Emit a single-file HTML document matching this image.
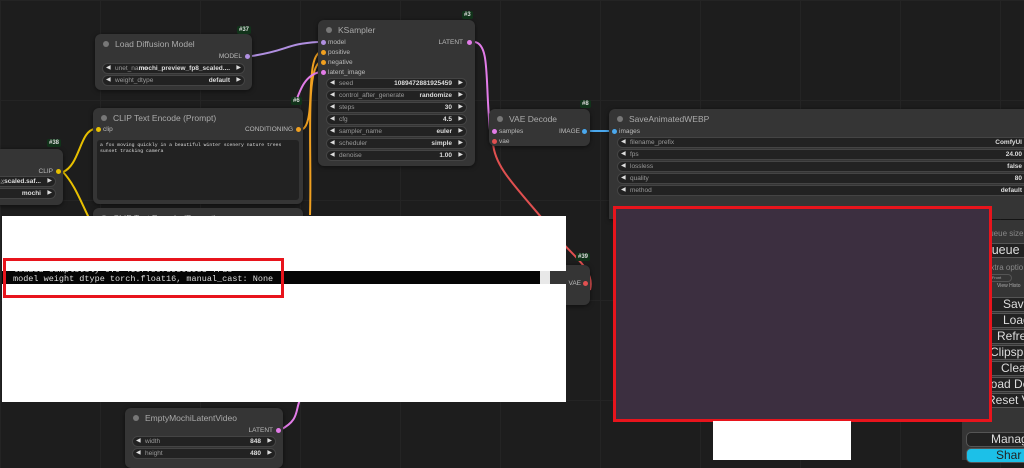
<!DOCTYPE html>
<html><head><meta charset="utf-8"><style>
*{box-sizing:border-box;margin:0;padding:0}
body{width:1024px;height:460px;overflow:hidden;background:#1d1d1d;font-family:"Liberation Sans",sans-serif;position:relative;
background-image:linear-gradient(#242424 1px,transparent 1px),linear-gradient(90deg,#242424 1px,transparent 1px);background-size:100px 100px;}
.n{position:absolute;background:#353535;border-radius:6px;box-shadow:0 1px 4px #0008}
.t{position:absolute;left:0;top:0;right:0;height:20px;color:#aaa;font-size:8.5px;line-height:20px;padding-left:20px}
.t:before{content:"";position:absolute;left:8px;top:7px;width:6px;height:6px;border-radius:50%;background:#777}
.id{position:absolute;background:#11331a;color:#ddd;font-size:6px;font-weight:bold;padding:1px 2px;border-radius:2px}
.w{position:absolute;height:11px;background:#222;border-radius:6px;border:1px solid #444;font-size:6.5px;color:#999;line-height:9px;padding:0 12px}
.w b{position:absolute;right:14px;color:#ddd}
.w:before{content:"◀";position:absolute;left:3px;color:#ddd;font-size:6px}
.w:after{content:"▶";position:absolute;right:3px;color:#ddd;font-size:6px}
.s{position:absolute;font-size:6.5px;color:#bbb}
.d{position:absolute;width:5px;height:5px;border-radius:50%}
.btn{position:absolute;left:969px;width:90px;height:15px;background:#222;border:1px solid #555;border-radius:5px;color:#ddd;font-size:12px;text-align:left;line-height:13px;white-space:nowrap;overflow:hidden}
</style></head><body>
<svg width="1024" height="460" style="position:absolute;left:0;top:0">
<g fill="none" stroke-width="2">
<path d="M252 56 C290 50 285 44 318 42" stroke="#b08fe0"/>
<path d="M475 42 C490 45 485 80 490 130" stroke="#e27ce8"/>
<path d="M63 172 C80 165 80 130 95 129" stroke="#e8c000"/>
<path d="M63 172 C75 185 80 200 90 220" stroke="#e8c000"/>
<path d="M303 129 C316 120 305 60 320 52 M310 215 C312 150 305 70 320 62" stroke="#f0a020"/>
<path d="M295 104 C300 90 305 75 320 72" stroke="#e27ce8"/>
<path d="M590 131 L612 131" stroke="#4aa8ee"/>
<path d="M493 143 C495 170 520 190 560 240 C575 258 595 270 590 290" stroke="#e05050"/>
<path d="M280 430 C300 420 295 410 300 400" stroke="#e27ce8"/>
</g></svg>

<div class="n" style="left:95px;top:34px;width:157px;height:56px"><div class="t">Load Diffusion Model</div>
<div class="s" style="right:10px;top:19px">MODEL</div><div class="d" style="right:2px;top:20px;background:#b08fe0"></div>
<div class="w" style="left:7px;top:29px;width:143px">unet_name<b>mochi_preview_fp8_scaled....</b></div>
<div class="w" style="left:7px;top:41px;width:143px">weight_dtype<b>default</b></div></div>
<div class="id" style="left:237px;top:26px">#37</div>

<div class="n" style="left:318px;top:20px;width:157px;height:146px"><div class="t">KSampler</div>
<div class="s" style="left:10px;top:19px">model</div><div class="d" style="left:3px;top:20px;background:#b08fe0"></div>
<div class="s" style="left:10px;top:29px">positive</div><div class="d" style="left:3px;top:30px;background:#f0a020"></div>
<div class="s" style="left:10px;top:39px">negative</div><div class="d" style="left:3px;top:40px;background:#f0a020"></div>
<div class="s" style="left:10px;top:49px">latent_image</div><div class="d" style="left:3px;top:50px;background:#e27ce8"></div>
<div class="s" style="right:12px;top:19px">LATENT</div><div class="d" style="right:3px;top:20px;background:#e27ce8"></div>
<div class="w" style="left:8px;top:58px;width:141px">seed<b>1089472881925459</b></div>
<div class="w" style="left:8px;top:70px;width:141px">control_after_generate<b>randomize</b></div>
<div class="w" style="left:8px;top:82px;width:141px">steps<b>30</b></div>
<div class="w" style="left:8px;top:94px;width:141px">cfg<b>4.5</b></div>
<div class="w" style="left:8px;top:106px;width:141px">sampler_name<b>euler</b></div>
<div class="w" style="left:8px;top:118px;width:141px">scheduler<b>simple</b></div>
<div class="w" style="left:8px;top:130px;width:141px">denoise<b>1.00</b></div></div>
<div class="id" style="left:462px;top:11px">#3</div>

<div class="n" style="left:93px;top:108px;width:210px;height:96px"><div class="t">CLIP Text Encode (Prompt)</div>
<div class="s" style="left:10px;top:18px">clip</div><div class="d" style="left:3px;top:19px;background:#e8c000"></div>
<div class="s" style="right:10px;top:18px">CONDITIONING</div><div class="d" style="right:2px;top:19px;background:#f0a020"></div>
<div style="position:absolute;left:4px;top:32px;width:202px;height:60px;background:#222;border-radius:3px;color:#ddd;font:4.8px 'Liberation Mono',monospace;padding:3px;line-height:6px">a fox moving quickly in a beautiful winter scenery nature trees sunset tracking camera</div></div>
<div class="id" style="left:291px;top:97px">#6</div>

<div class="n" style="left:-20px;top:149px;width:83px;height:56px">
<div class="s" style="right:10px;top:19px">CLIP</div><div class="d" style="right:2px;top:20px;background:#e8c000"></div>
<div class="w" style="left:0;top:27px;width:76px;padding-left:20px">x<b>n_scaled.saf...</b></div>
<div class="w" style="left:0;top:39px;width:76px">x<b>mochi</b></div></div>
<div class="id" style="left:47px;top:139px">#38</div>

<div class="n" style="left:93px;top:208px;width:210px;height:20px"><div class="t">CLIP Text Encode (Prompt)</div></div>

<div class="n" style="left:489px;top:109px;width:101px;height:37px"><div class="t">VAE Decode</div>
<div class="s" style="left:10px;top:19px">samples</div><div class="d" style="left:3px;top:20px;background:#e27ce8"></div>
<div class="s" style="left:10px;top:29px">vae</div><div class="d" style="left:3px;top:30px;background:#e05050"></div>
<div class="s" style="right:10px;top:19px">IMAGE</div><div class="d" style="right:3px;top:20px;background:#4aa8ee"></div></div>
<div class="id" style="left:580px;top:100px">#8</div>

<div class="n" style="left:609px;top:109px;width:430px;height:110px;border-radius:6px 0 0 0"><div class="t">SaveAnimatedWEBP</div>
<div class="s" style="left:10px;top:19px">images</div><div class="d" style="left:3px;top:20px;background:#4aa8ee"></div>
<div class="w" style="left:8px;top:28px;width:430px">filename_prefix<b style="right:24px">ComfyUI</b></div>
<div class="w" style="left:8px;top:40px;width:430px">fps<b style="right:24px">24.00</b></div>
<div class="w" style="left:8px;top:52px;width:430px">lossless<b style="right:24px">false</b></div>
<div class="w" style="left:8px;top:64px;width:430px">quality<b style="right:24px">80</b></div>
<div class="w" style="left:8px;top:76px;width:430px">method<b style="right:24px">default</b></div></div>

<div class="n" style="left:550px;top:265px;width:40px;height:40px"><div class="s" style="right:9px;top:15px">VAE</div><div class="d" style="right:2px;top:16px;background:#e05050"></div></div>
<div class="id" style="left:576px;top:253px">#39</div>

<div class="n" style="left:125px;top:408px;width:158px;height:60px"><div class="t">EmptyMochiLatentVideo</div>
<div class="s" style="right:10px;top:19px">LATENT</div><div class="d" style="right:2px;top:20px;background:#e27ce8"></div>
<div class="w" style="left:7px;top:28px;width:144px">width<b>848</b></div>
<div class="w" style="left:7px;top:40px;width:144px">height<b>480</b></div></div>

<div style="position:absolute;left:962px;top:220px;width:70px;height:240px;background:#353535"></div>
<div style="position:absolute;left:983px;top:229px;color:#888;font-size:8px">Queue size</div>
<div class="btn" style="top:243px;padding-left:12px;font-size:12.5px">Queue Pr</div>
<div style="position:absolute;left:985px;top:263px;color:#888;font-size:8px">Extra optio</div>
<div style="position:absolute;left:968px;top:274px;width:44px;height:8px;border:1px solid #555;border-radius:4px;font-size:4px;color:#aaa;text-align:center">Queue Front</div>
<div style="position:absolute;left:997px;top:283px;color:#aaa;font-size:5px">View Histo</div>
<div class="btn" style="top:297px;padding-left:33px">Save</div>
<div class="btn" style="top:313px;padding-left:33px">Load</div>
<div class="btn" style="top:329px;padding-left:27px">Refresh</div>
<div class="btn" style="top:345px;padding-left:20px">Clipspace</div>
<div class="btn" style="top:361px;padding-left:31px">Clear</div>
<div class="btn" style="top:377px;padding-left:14px">Load De</div>
<div class="btn" style="top:393px;padding-left:17px">Reset V</div>
<div class="btn" style="top:432px;left:966px;padding-left:24px">Manag</div>
<div class="btn" style="top:448px;left:966px;background:#1cc0e8;color:#222;padding-left:29px">Shar</div>

<div style="position:absolute;left:613px;top:206px;width:379px;height:216px;border:3px solid #e8141c;background:#3c2f40"></div>
<div style="position:absolute;left:713px;top:421px;width:138px;height:39px;background:#fff"></div>

<div style="position:absolute;left:2px;top:216px;width:564px;height:55px;background:#fff"></div>
<div style="position:absolute;left:2px;top:284px;width:564px;height:118px;background:#fff"></div>
<div style="position:absolute;left:2px;top:271px;width:538px;height:13px;background:#050505;overflow:hidden;font:8.5px 'Liberation Mono',monospace;color:#ddd;padding-left:11px;line-height:9px">
<div style="margin-top:-5px">loaded completely 0.0 4667.50739501953 True</div><div>model weight dtype torch.float16, manual_cast: None</div></div>
<div style="position:absolute;left:540px;top:271px;width:10px;height:13px;background:#e8e8e8"></div>
<div style="position:absolute;left:3px;top:258px;width:281px;height:40px;border:3px solid #e8141c"></div>
</body></html>
